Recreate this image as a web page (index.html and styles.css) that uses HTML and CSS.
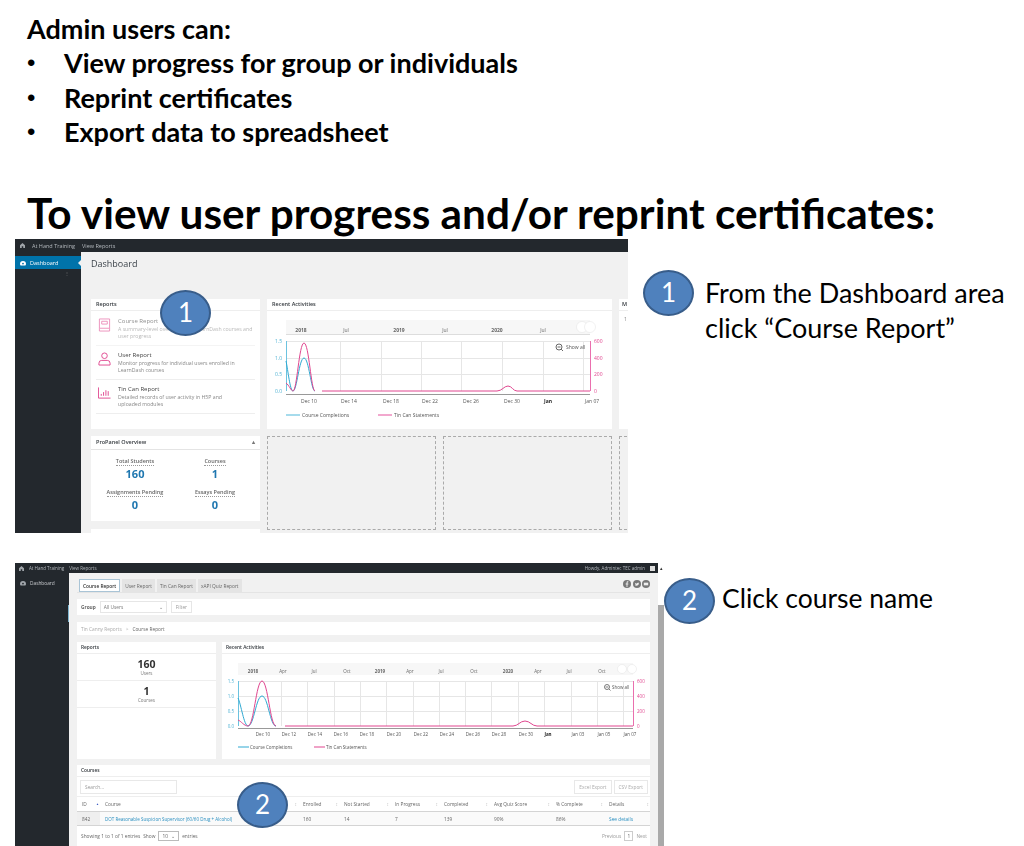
FILE: index.html
```html
<!DOCTYPE html>
<html lang="en">
<head>
    <meta charset="UTF-8">
    <meta name="viewport" content="width=device-width, initial-scale=1.0">
    <title>Viewing user progress</title>
    <link rel="stylesheet" href="styles.css">
</head>
<body>
<div class="slide">
    <div class="intro">
        <p class="intro-title">Admin users can:</p>
        <ul class="intro-list">
            <li>View progress for group or individuals</li>
            <li>Reprint certificates</li>
            <li>Export data to spreadsheet</li>
        </ul>
    </div>

    <h1 class="headline">To view user progress and/or reprint certificates:</h1>

    <!-- Step 1: dashboard screenshot -->
    <div class="step step-one">
        <div class="shot-wrap">
            <div class="shot shot-dash">
                <div class="adminbar">
                    <svg class="bar-icon" viewBox="0 0 10 10"><path d="M5 0 0 4.5V10h3.5V6.5h3V10H10V4.5z" fill="#a0a5aa"/></svg>
                    <span>At Hand Training</span>
                    <span>View Reports</span>
                </div>
                <div class="dash-body">
                    <div class="sidebar">
                        <div class="side-item side-active">
                            <svg class="side-icon" viewBox="0 0 10 10"><path d="M5 1.500a5 5 0 0 0-5 5q0 1.500 1 2.500h8q1-1 1-2.500a5 5 0 0 0-5-5zm0 3a1.500 1.500 0 1 1 0 3 1.500 1.500 0 0 1 0-3z" fill="#fff"/></svg>
                            <span>Dashboard</span>
                        </div>
                        <div class="side-dots">⋮</div>
                    </div>
                    <div class="dash-main">
                        <div class="dash-title">Dashboard</div>
                        <div class="dash-grid">
                            <div class="card">
                                <div class="card-head">Reports</div>
                                <div class="report-list">
                                    <div class="report-row report-faded">
                                        <svg class="report-icon" viewBox="0 0 14 14" fill="none" stroke="#e0468f" stroke-width="1"><path d="M1.500.5h11v10h-11zM1.500 10.500v3h11v-3M4 3h6v3H4z"/></svg>
                                        <div>
                                            <div class="report-name">Course Report</div>
                                            <div class="report-text">A summary-level overview of all LearnDash courses and user progress</div>
                                        </div>
                                    </div>
                                    <div class="report-row">
                                        <svg class="report-icon" viewBox="0 0 14 14" fill="none" stroke="#e0468f" stroke-width="1"><circle cx="7" cy="3.500" r="3"/><path d="M1 13.500v-2q0-3 3-3h6q3 0 3 3v2z"/></svg>
                                        <div>
                                            <div class="report-name">User Report</div>
                                            <div class="report-text">Monitor progress for individual users enrolled in LearnDash courses</div>
                                        </div>
                                    </div>
                                    <div class="report-row">
                                        <svg class="report-icon" viewBox="0 0 14 14" fill="none" stroke="#e0468f" stroke-width="1"><path d="M.5 1v11.500h13M3.500 10V8M6 10V6M8.500 10V4M11 10V5"/></svg>
                                        <div>
                                            <div class="report-name">Tin Can Report</div>
                                            <div class="report-text">Detailed records of user activity in H5P and<br>uploaded modules</div>
                                        </div>
                                    </div>
                                </div>
                            </div>
                            <div class="card card-wide">
                                <div class="card-head">Recent Activities</div>
                                <svg class="chart chart-dash" width="345" height="119" viewBox="0 0 345 119">
                                    <rect x="19" y="10" width="304" height="14" fill="#f7f7f7"/>
                                    <path d="M19 24.500h304" stroke="#ddd"/>
                                    <g class="range-text">
                                        <text x="34" y="22" text-anchor="middle" font-weight="700">2018</text>
                                        <text x="79" y="22" text-anchor="middle">Jul</text>
                                        <text x="132" y="22" text-anchor="middle" font-weight="700">2019</text>
                                        <text x="178" y="22" text-anchor="middle">Jul</text>
                                        <text x="230" y="22" text-anchor="middle" font-weight="700">2020</text>
                                        <text x="276" y="22" text-anchor="middle">Jul</text>
                                    </g>
                                    <circle cx="315" cy="17" r="5.500" fill="#fff" stroke="#e2e2e2" stroke-width=".5"/>
                                    <circle cx="323" cy="17" r="5.500" fill="#fff" stroke="#e2e2e2" stroke-width=".5"/>
                                    <path d="M73.500 31v50M114.500 31v50M154.500 31v50M194.500 31v50M235.500 31v50M276.500 31v50M316.500 31v50M19 31.500h304M19 48.500h304M19 64.500h304" stroke="#e6e6e6" fill="none"/>
                                    <path d="M19 84.500h304" stroke="#999" stroke-width="1.200"/>
                                    <path d="M19.500 31v50" stroke="#6cc3e0"/>
                                    <path d="M323.500 31v50" stroke="#ea6fae"/>
                                    <g class="axis-left">
                                        <text x="15" y="33" text-anchor="end">1.5</text>
                                        <text x="15" y="50" text-anchor="end">1.0</text>
                                        <text x="15" y="66" text-anchor="end">0.5</text>
                                        <text x="15" y="83" text-anchor="end">0.0</text>
                                    </g>
                                    <g class="axis-right">
                                        <text x="327" y="33">600</text>
                                        <text x="327" y="50">400</text>
                                        <text x="327" y="66">200</text>
                                        <text x="327" y="83">0</text>
                                    </g>
                                    <path d="M19 51C21 60 23 81 26 81C30 81 32 48 37 48C42 48 44 81 48 81" fill="none" stroke="#2fa9d2" stroke-width="1"/>
                                    <path d="M19 73C22 75 24 81 26 81C30 81 32 33 37 33C42 33 44 81 48 81" fill="none" stroke="#e0468f" stroke-width="1"/>
                                    <path d="M55 81H230C235 81 237 76 241 76C245 76 246 81 250 81H323" fill="none" stroke="#e0468f" stroke-width="1"/>
                                    <g class="axis-x">
                                        <text x="42" y="93" text-anchor="middle">Dec 10</text>
                                        <text x="82" y="93" text-anchor="middle">Dec 14</text>
                                        <text x="124" y="93" text-anchor="middle">Dec 18</text>
                                        <text x="163" y="93" text-anchor="middle">Dec 22</text>
                                        <text x="204" y="93" text-anchor="middle">Dec 26</text>
                                        <text x="245" y="93" text-anchor="middle">Dec 30</text>
                                        <text x="281" y="93" text-anchor="middle" font-weight="700" fill="#222">Jan</text>
                                        <text x="325" y="93" text-anchor="middle">Jan 07</text>
                                    </g>
                                    <circle cx="292" cy="37" r="3" fill="none" stroke="#444" stroke-width=".8"/>
                                    <path d="M294.200 39.200 296 41M290.500 37h3" stroke="#444" stroke-width=".8"/>
                                    <text class="axis-x" x="299" y="39">Show all</text>
                                    <path d="M19 105h14" stroke="#6cc3e0" stroke-width="1.200"/>
                                    <text class="axis-x" x="35" y="107">Course Completions</text>
                                    <path d="M111 105h14" stroke="#ea6fae" stroke-width="1.200"/>
                                    <text class="axis-x" x="127" y="107">Tin Can Statements</text>
                                </svg>
                            </div>
                            <div class="card card-cut">
                                <div class="card-head">M</div>
                                <div class="report-text">1</div>
                            </div>
                            <div class="stack">
                                <div class="card panel">
                                    <div class="panel-head"><span>ProPanel Overview</span><span class="caret">▴</span></div>
                                    <div class="stats">
                                        <div class="stat"><span class="stat-label">Total Students</span><span class="stat-num">160</span></div>
                                        <div class="stat"><span class="stat-label">Courses</span><span class="stat-num">1</span></div>
                                        <div class="stat"><span class="stat-label">Assignments Pending</span><span class="stat-num">0</span></div>
                                        <div class="stat"><span class="stat-label">Essays Pending</span><span class="stat-num">0</span></div>
                                    </div>
                                </div>
                                <div class="card stub"></div>
                            </div>
                            <div class="drop"></div>
                            <div class="drop"></div>
                            <div class="drop"></div>
                        </div>
                    </div>
                </div>
            </div>
            <div class="callout callout-dash">1</div>
        </div>
        <div class="callout">1</div>
        <p class="note note-one">From the Dashboard area<br>click “Course Report”</p>
    </div>

    <!-- Step 2: course report screenshot -->
    <div class="step step-two">
        <div class="shot-wrap">
            <div class="shot shot-report">
                <div class="report-app">
                    <div class="adminbar adminbar-small">
                        <svg class="bar-icon" viewBox="0 0 10 10"><path d="M5 0 0 4.500V10h3.500V6.500h3V10H10V4.500z" fill="#a0a5aa"/></svg>
                        <span>At Hand Training</span>
                        <span>View Reports</span>
                        <span class="howdy">Howdy, Admintec TEC admin</span>
                        <span class="avatar"></span>
                    </div>
                    <div class="report-body">
                        <div class="sidebar sidebar-small">
                            <div class="side-item">
                                <svg class="side-icon" viewBox="0 0 10 10"><path d="M5 1.500a5 5 0 0 0-5 5q0 1.500 1 2.500h8q1-1 1-2.500a5 5 0 0 0-5-5zm0 3a1.500 1.500 0 1 1 0 3 1.500 1.500 0 0 1 0-3z" fill="#a0a5aa"/></svg>
                                <span>Dashboard</span>
                            </div>
                            <div class="side-mark"></div>
                        </div>
                        <div class="report-main">
                            <div class="tabs">
                                <span class="tab tab-on">Course Report</span>
                                <span class="tab">User Report</span>
                                <span class="tab">Tin Can Report</span>
                                <span class="tab">xAPI Quiz Report</span>
                                <span class="social">
                                    <svg viewBox="0 0 9 9"><circle cx="4.500" cy="4.500" r="4.500" fill="#777"/><path d="M5 8V5h1V4H5V3q0-.5.5-.5H6v-1H5.200Q4 1.500 4 3v1H3v1h1v3z" fill="#eee"/></svg>
                                    <svg viewBox="0 0 9 9"><circle cx="4.500" cy="4.500" r="4.500" fill="#777"/><path d="M2 6q2 1 3.500 0T6.500 3.500L7 3H5.500Q4.500 3 4.500 4 3 4 2.200 3q-.2 1.500.8 2z" fill="#eee"/></svg>
                                    <svg viewBox="0 0 9 9"><circle cx="4.500" cy="4.500" r="4.500" fill="#777"/><path d="M2 3h5v3H2z" fill="#eee"/></svg>
                                </span>
                            </div>
                            <div class="bar-card filter-card">
                                <b>Group</b>
                                <span class="fake-select">All Users<i>⌄</i></span>
                                <span class="fake-btn">Filter</span>
                            </div>
                            <div class="bar-card crumbs">
                                <span class="crumb-link">Tin Canny Reports</span><span class="crumb-sep">&gt;</span><span>Course Report</span>
                            </div>
                            <div class="report-cards">
                                <div class="card tall">
                                    <div class="card-head card-head-small">Reports</div>
                                    <div class="count"><strong>160</strong><span>Users</span></div>
                                    <div class="count"><strong>1</strong><span>Courses</span></div>
                                </div>
                                <div class="card tall">
                                    <div class="card-head card-head-small">Recent Activities</div>
                                    <svg class="chart" width="428" height="105" viewBox="0 0 428 105">
                                        <rect x="16" y="9" width="395" height="12" fill="#f7f7f7"/>
                                        <g class="range-text small">
                                            <text x="31" y="19" text-anchor="middle" font-weight="700">2018</text>
                                            <text x="61" y="19" text-anchor="middle">Apr</text>
                                            <text x="92" y="19" text-anchor="middle">Jul</text>
                                            <text x="125" y="19" text-anchor="middle">Oct</text>
                                            <text x="158" y="19" text-anchor="middle" font-weight="700">2019</text>
                                            <text x="188" y="19" text-anchor="middle">Apr</text>
                                            <text x="219" y="19" text-anchor="middle">Jul</text>
                                            <text x="252" y="19" text-anchor="middle">Oct</text>
                                            <text x="286" y="19" text-anchor="middle" font-weight="700">2020</text>
                                            <text x="316" y="19" text-anchor="middle">Apr</text>
                                            <text x="347" y="19" text-anchor="middle">Jul</text>
                                            <text x="380" y="19" text-anchor="middle">Oct</text>
                                        </g>
                                        <circle cx="400" cy="15" r="4.500" fill="#fff" stroke="#e2e2e2" stroke-width=".5"/>
                                        <circle cx="410" cy="15" r="4.500" fill="#fff" stroke="#e2e2e2" stroke-width=".5"/>
                                        <path d="M59.500 27v45M85.500 27v45M112.500 27v45M138.500 27v45M164.500 27v45M191.500 27v45M217.500 27v45M243.500 27v45M269.500 27v45M296.500 27v45M322.500 27v45M349.500 27v45M375.500 27v45M401.500 27v45M16 27.500h395M16 42.500h395M16 57.500h395" stroke="#e6e6e6" fill="none"/>
                                        <path d="M16 74.500h395" stroke="#999"/>
                                        <path d="M16.500 27v45" stroke="#6cc3e0"/>
                                        <path d="M411.500 27v45" stroke="#ea6fae"/>
                                        <g class="axis-left small">
                                            <text x="12" y="29" text-anchor="end">1.5</text>
                                            <text x="12" y="44" text-anchor="end">1.0</text>
                                            <text x="12" y="59" text-anchor="end">0.5</text>
                                            <text x="12" y="74" text-anchor="end">0.0</text>
                                        </g>
                                        <g class="axis-right small">
                                            <text x="415" y="29">600</text>
                                            <text x="415" y="44">400</text>
                                            <text x="415" y="59">200</text>
                                            <text x="415" y="74">0</text>
                                        </g>
                                        <path d="M16 44C19 50 22 72 26 72C32 72 34 42 40 42C46 42 48 72 54 72" fill="none" stroke="#2fa9d2"/>
                                        <path d="M16 66C19 67 22 72 26 72C32 72 34 27 40 27C46 27 48 72 54 72" fill="none" stroke="#e0468f"/>
                                        <path d="M63 72H291C296 72 298 67 303 67C308 67 310 72 315 72H411" fill="none" stroke="#e0468f"/>
                                        <g class="axis-x small">
                                            <text x="41" y="82" text-anchor="middle">Dec 10</text>
                                            <text x="67" y="82" text-anchor="middle">Dec 12</text>
                                            <text x="93" y="82" text-anchor="middle">Dec 14</text>
                                            <text x="119" y="82" text-anchor="middle">Dec 16</text>
                                            <text x="145" y="82" text-anchor="middle">Dec 18</text>
                                            <text x="172" y="82" text-anchor="middle">Dec 20</text>
                                            <text x="199" y="82" text-anchor="middle">Dec 22</text>
                                            <text x="225" y="82" text-anchor="middle">Dec 24</text>
                                            <text x="251" y="82" text-anchor="middle">Dec 26</text>
                                            <text x="277" y="82" text-anchor="middle">Dec 28</text>
                                            <text x="304" y="82" text-anchor="middle">Dec 30</text>
                                            <text x="326" y="82" text-anchor="middle" font-weight="700" fill="#222">Jan</text>
                                            <text x="356" y="82" text-anchor="middle">Jan 03</text>
                                            <text x="382" y="82" text-anchor="middle">Jan 05</text>
                                            <text x="408" y="82" text-anchor="middle">Jan 07</text>
                                        </g>
                                        <circle cx="385" cy="33" r="2.500" fill="none" stroke="#444" stroke-width=".7"/>
                                        <path d="M387 35l1.500 1.500M383.700 33h2.600" stroke="#444" stroke-width=".7"/>
                                        <text class="axis-x small" x="390" y="35">Show all</text>
                                        <path d="M16 93h11" stroke="#2fa9d2"/>
                                        <text class="axis-x small" x="28" y="95">Course Completions</text>
                                        <path d="M92 93h11" stroke="#e0468f"/>
                                        <text class="axis-x small" x="104" y="95">Tin Can Statements</text>
                                    </svg>
                                </div>
                            </div>
                            <div class="card courses">
                                <div class="card-head card-head-small">Courses</div>
                                <div class="courses-tools">
                                    <span class="search-box">Search...</span>
                                    <span class="export">Excel Export</span>
                                    <span class="export">CSV Export</span>
                                </div>
                                <table class="course-table">
                                    <colgroup>
                                        <col class="col-id"><col class="col-course"><col class="col-enrolled"><col class="col-not"><col class="col-prog"><col class="col-done"><col class="col-avg"><col class="col-pct"><col class="col-det">
                                    </colgroup>
                                    <thead>
                                        <tr>
                                            <th><div class="th-in"><span>ID</span><i class="sort-on">▲</i></div></th>
                                            <th><div class="th-in"><span>Course</span><i>↕</i></div></th>
                                            <th><div class="th-in"><span>Enrolled</span><i>↕</i></div></th>
                                            <th><div class="th-in"><span>Not Started</span><i>↕</i></div></th>
                                            <th><div class="th-in"><span>In Progress</span><i>↕</i></div></th>
                                            <th><div class="th-in"><span>Completed</span><i>↕</i></div></th>
                                            <th><div class="th-in"><span>Avg Quiz Score</span><i>↕</i></div></th>
                                            <th><div class="th-in"><span>% Complete</span><i>↕</i></div></th>
                                            <th><div class="th-in"><span>Details</span><i>↕</i></div></th>
                                        </tr>
                                    </thead>
                                    <tbody>
                                        <tr>
                                            <td class="id-cell">842</td>
                                            <td><a class="link link-course">DOT Reasonable Suspicion Supervisor (60/60 Drug + Alcohol)</a></td>
                                            <td>160</td>
                                            <td>14</td>
                                            <td>7</td>
                                            <td>139</td>
                                            <td>90%</td>
                                            <td>86%</td>
                                            <td><a class="link">See details</a></td>
                                        </tr>
                                    </tbody>
                                </table>
                                <div class="courses-foot">
                                    <span>Showing 1 to 1 of 1 entries</span>
                                    <span>Show</span>
                                    <span class="per-page">10 <i>⌄</i></span>
                                    <span>entries</span>
                                    <span class="pager">Previous <b>1</b> Next</span>
                                </div>
                            </div>
                        </div>
                    </div>
                </div>
                <div class="scrollbar"><span class="scroll-arrow">▴</span><div class="scroll-thumb"></div></div>
            </div>
            <div class="callout callout-table">2</div>
        </div>
        <div class="callout">2</div>
        <p class="note note-two">Click course name</p>
    </div>
</div>
</body>
</html>
```

FILE: styles.css
```css
html, body {
    margin: 0;
    height: 846px;
    overflow: hidden;
    background: #fff;
}
.slide {
    font-family: Lato, "Open Sans", sans-serif;
    color: #000;
    padding-top: 14px;
}
.intro {
    padding-left: 27px;
}
.intro-title {
    margin: 0;
    font-size: 27px;
    font-weight: 700;
    line-height: 29px;
}
.intro-list {
    list-style: none;
    margin: 3px 0 0;
    padding: 0;
}
.intro-list li {
    position: relative;
    padding-left: 37px;
    font-size: 27px;
    font-weight: 700;
    line-height: 34.500px;
}
.intro-list li::before {
    content: "•";
    position: absolute;
    left: 0;
    font-family: "Liberation Sans", sans-serif;
    font-size: 24px;
    font-weight: 400;
}
.headline {
    margin: 37.500px 0 0 27px;
    font-size: 42.300px;
    font-weight: 700;
    line-height: 52px;
    white-space: nowrap;
}

.step {
    display: flex;
    align-items: flex-start;
    margin-left: 15px;
}
.step-one {
    margin-top: 0;
    height: 294px;
}
.step-two {
    margin-top: 30px;
}
.shot-wrap {
    position: relative;
    flex: none;
}
.shot {
    font-family: "Open Sans", sans-serif;
    color: #444;
    overflow: hidden;
    filter: blur(.55px);
}
.shot-dash {
    width: 613px;
    height: 294px;
    background: #f1f1f1;
}
.shot-report {
    display: flex;
    width: 649px;
    height: 283px;
    background: #fff;
}

.callout {
    flex: none;
    box-sizing: border-box;
    width: 51px;
    height: 46px;
    border: 2px solid #385d8a;
    border-radius: 50%;
    background: #4f81bd;
    color: #fff;
    font-family: Lato, sans-serif;
    font-size: 26px;
    line-height: 41px;
    text-align: center;
}
.step-one > .callout {
    margin: 31px 0 0 15px;
}
.step-two > .callout {
    margin: 15px 0 0 0;
}
.callout-dash {
    position: absolute;
    left: 145px;
    top: 51px;
}
.callout-table {
    position: absolute;
    left: 222px;
    top: 219px;
}
.note {
    margin: 0;
    font-family: Lato, sans-serif;
    font-size: 27px;
    line-height: 35px;
    white-space: nowrap;
}
.note-one {
    margin: 36px 0 0 11px;
}
.note-two {
    margin: 18px 0 0 7px;
    font-size: 26.500px;
}

/* fake wp admin */
.adminbar {
    display: flex;
    align-items: center;
    gap: 7px;
    height: 13px;
    padding-left: 5px;
    background: #23282d;
    color: #b4b9be;
    font-size: 5.500px;
}
.adminbar-small {
    gap: 5px;
    height: 10px;
    padding-left: 4px;
    font-size: 4.500px;
}
.bar-icon {
    width: 5px;
    height: 5px;
}
.howdy {
    margin-left: auto;
}
.avatar {
    width: 5px;
    height: 5px;
    margin-right: 3px;
    background: #ddd;
}
.dash-body {
    display: flex;
    height: 281px;
}
.sidebar {
    flex: none;
    width: 66px;
    padding-top: 4px;
    background: #23282d;
    color: #c8cbce;
    font-size: 5.500px;
}
.sidebar-small {
    width: 54px;
    padding-top: 3px;
    font-size: 4.800px;
}
.side-item {
    position: relative;
    display: flex;
    align-items: center;
    gap: 4px;
    height: 13px;
    padding-left: 5px;
}
.side-active {
    background: #0073aa;
    color: #fff;
}
.side-active::after {
    content: "";
    position: absolute;
    right: 0;
    top: 4px;
    border: 3px solid transparent;
    border-right-color: #f1f1f1;
    border-left-width: 0;
}
.side-icon {
    width: 6px;
    height: 6px;
}
.side-dots {
    margin-top: 2px;
    padding-right: 12px;
    text-align: right;
    font-size: 4px;
    color: #777;
}
.side-mark {
    height: 17px;
    margin-top: 16px;
    border-right: 1px solid #7fb6d0;
}
.dash-main {
    flex: 1;
    min-width: 0;
    padding-left: 10px;
    overflow: hidden;
}
.dash-title {
    height: 47px;
    padding-top: 5px;
    box-sizing: border-box;
    font-size: 9px;
    line-height: 14px;
    color: #3c434a;
}
.dash-grid {
    display: grid;
    grid-template-columns: 169px 169px 169px 169px;
    grid-template-rows: 130px 94px;
    gap: 7px;
}
.card {
    background: #fff;
    min-width: 0;
}
.card-wide {
    grid-column: span 2;
}
.card-head {
    height: 11px;
    padding-left: 5px;
    border-bottom: 1px solid #eee;
    font-size: 5.500px;
    font-weight: 600;
    line-height: 11px;
    white-space: nowrap;
    color: #32373c;
}
.card-head-small {
    height: 11px;
    padding-left: 4px;
    font-size: 4.800px;
}
.card-cut .card-head {
    padding-left: 3px;
}
.card-cut .report-text {
    padding: 5px 0 0 5px;
}
.report-list {
    padding: 0 5px;
}
.report-row {
    display: flex;
    gap: 7px;
    height: 28px;
    padding: 5px 2px 0;
    border-bottom: 1px solid #eee;
}
.report-row:first-child {
    padding-top: 6px;
}
.report-faded {
    opacity: .6;
}
.report-icon {
    flex: none;
    width: 13px;
    height: 14px;
    margin-top: 1px;
}
.report-name {
    font-size: 6px;
    line-height: 9px;
    color: #444;
}
.report-text {
    font-size: 5.200px;
    line-height: 7.300px;
    color: #888;
}
.stack {
    display: flex;
    flex-direction: column;
    gap: 8px;
}
.panel {
    flex: none;
    height: 85px;
}
.stub {
    flex: none;
    height: 20px;
}
.panel-head {
    display: flex;
    justify-content: space-between;
    height: 13px;
    padding: 0 5px;
    border-bottom: 1px solid #e4e4e4;
    font-size: 5.500px;
    font-weight: 600;
    line-height: 13px;
    color: #32373c;
}
.caret {
    color: #777;
}
.stats {
    display: grid;
    grid-template-columns: 1fr 1fr;
    padding: 7px 5px 0 4px;
}
.stat {
    display: flex;
    flex-direction: column;
    align-items: center;
    height: 31px;
    white-space: nowrap;
}
.stat-label {
    font-size: 5.500px;
    font-weight: 600;
    line-height: 8px;
    color: #666;
    border-bottom: 1px dotted #999;
}
.stat-num {
    margin-top: 1px;
    font-size: 11px;
    font-weight: 700;
    line-height: 13px;
    color: #1f77b0;
}
.drop {
    border: 1px dashed #aaa;
    box-sizing: border-box;
    background: #f1f1f1;
}
.chart {
    display: block;
    font-family: "Open Sans", sans-serif;
}
.chart-dash {
    margin-top: -1px;
}
.range-text {
    font-size: 5px;
    fill: #666;
}
.axis-left {
    font-size: 5px;
    fill: #4fb2d4;
}
.axis-right {
    font-size: 5px;
    fill: #e0468f;
}
.axis-x {
    font-size: 5px;
    fill: #555;
}
.small {
    font-size: 4.500px;
}

/* course report */
.report-app {
    flex: none;
    width: 643px;
}
.report-body {
    display: flex;
    height: 273px;
}
.report-main {
    flex: 1;
    min-width: 0;
    padding: 6px 8px 0;
    background: #f1f1f1;
}
.tabs {
    display: flex;
    align-items: stretch;
    gap: 2px;
    height: 13px;
    margin-bottom: 6px;
    padding-left: 2px;
    border-bottom: 1px solid #e4e4e4;
    font-size: 4.800px;
}
.tab {
    display: flex;
    align-items: center;
    padding: 0 3px;
    background: #e4e4e4;
    color: #666;
    white-space: nowrap;
}
.tab-on {
    background: #fff;
    border: 1px solid #a9c4d6;
    color: #333;
    font-weight: 600;
    padding: 0 3px;
}
.social {
    display: flex;
    gap: 1.500px;
    margin-left: auto;
    padding-top: 1px;
}
.social svg {
    width: 8px;
    height: 8px;
}
.bar-card {
    display: flex;
    align-items: center;
    background: #fff;
    padding-left: 4px;
    font-size: 4.800px;
    color: #666;
}
.filter-card {
    gap: 4px;
    height: 16px;
    margin-bottom: 7px;
}
.fake-select {
    display: flex;
    justify-content: space-between;
    width: 59px;
    padding: 2px 3px;
    border: 1px solid #e6e6e6;
    color: #777;
}
.fake-select i {
    font-style: normal;
}
.fake-btn {
    padding: 2px 4px;
    border: 1px solid #e6e6e6;
    color: #999;
}
.crumbs {
    height: 13px;
    margin-bottom: 7px;
}
.crumb-link {
    color: #aaa;
}
.crumb-sep {
    margin: 0 4px;
    color: #aaa;
}
.report-cards {
    display: grid;
    grid-template-columns: 139px 428px;
    gap: 6px;
    margin-bottom: 6px;
}
.tall {
    height: 117px;
}
.count {
    display: flex;
    flex-direction: column;
    align-items: center;
    height: 21px;
    padding-top: 5px;
    border-bottom: 1px solid #eee;
    font-size: 4.500px;
    color: #777;
}
.count strong {
    font-size: 10.500px;
    line-height: 10px;
    color: #333;
}
.count span {
    line-height: 9px;
}
.courses {
    height: 90px;
    font-size: 4.800px;
    color: #666;
}
.courses-tools {
    display: flex;
    align-items: center;
    gap: 2px;
    height: 20px;
    padding: 0 2px 0 3px;
    border-bottom: 1px solid #eee;
    box-sizing: border-box;
}
.search-box {
    width: 91px;
    height: 12px;
    margin-right: auto;
    padding-left: 4px;
    border: 1px solid #e8e8e8;
    line-height: 12px;
    color: #999;
}
.export {
    padding: 3px 4px;
    border: 1px solid #e8e8e8;
    color: #aaa;
}
.course-table {
    width: 573px;
    table-layout: fixed;
    border-collapse: collapse;
}
.col-id { width: 23px; }
.col-course { width: 198px; }
.col-enrolled { width: 41px; }
.col-not { width: 51px; }
.col-prog { width: 49px; }
.col-done { width: 50px; }
.col-avg { width: 62px; }
.col-pct { width: 53px; }
.col-det { width: 46px; }
.course-table th {
    height: 14px;
    padding: 0 1px 0 5px;
    border-bottom: 1px solid #d4d4d4;
    text-align: left;
    font-weight: 400;
}
.th-in {
    display: flex;
    align-items: center;
    justify-content: space-between;
    white-space: nowrap;
}
.th-in i {
    font-style: normal;
    color: #bbb;
}
.th-in .sort-on {
    font-size: 3px;
    line-height: 7px;
    color: #3b5bc4;
}
.course-table td {
    height: 13px;
    padding: 0 0 0 5px;
    border-bottom: 1px solid #d4d4d4;
    background: #fafafa;
    white-space: nowrap;
}
.course-table td.id-cell {
    background: #efefef;
}
.link {
    color: #2a8fc0;
}
.link-course {
    font-size: 4.500px;
}
.courses-foot {
    display: flex;
    align-items: center;
    gap: 3px;
    height: 20px;
    padding: 0 3px 0 4px;
}
.per-page {
    padding: 1px 3px;
    border: 1px solid #bbb;
    color: #666;
}
.per-page i {
    font-style: normal;
    margin-left: 2px;
}
.pager {
    margin-left: auto;
    color: #999;
}
.pager b {
    margin: 0 2px;
    padding: 1px 2px;
    border: 1px solid #ccc;
    font-weight: 400;
    color: #666;
}
.scrollbar {
    flex: none;
    width: 6px;
    text-align: center;
    font-size: 5px;
    line-height: 10px;
    color: #333;
}
.scroll-arrow {
    display: block;
    height: 42px;
}
.scroll-thumb {
    height: 241px;
    background: #a9a9a9;
}
```
